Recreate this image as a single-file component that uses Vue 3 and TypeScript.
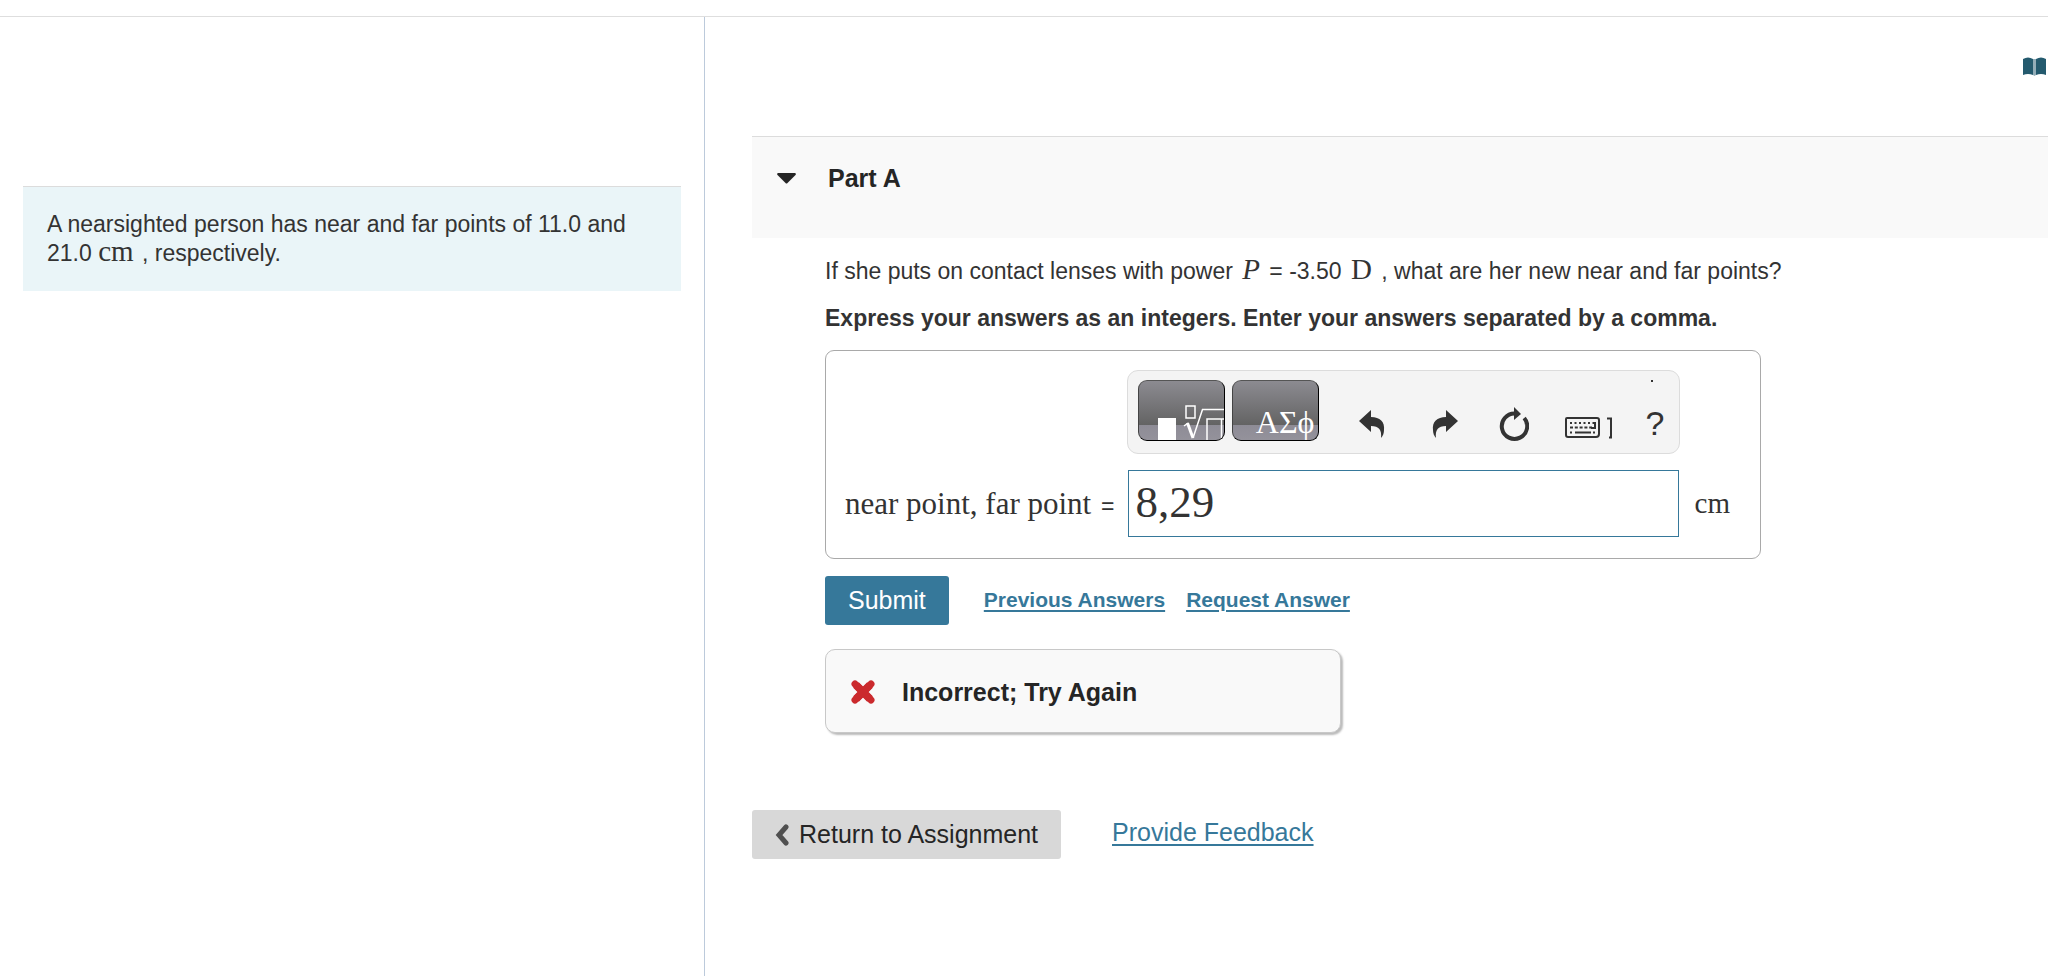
<script setup lang="ts">
import { ref } from 'vue'

const answer = ref('8,29')
const expanded = ref(true)
</script>

<template>
  <div class="page">
    <aside class="intro-pane">
      <p class="intro">
        A nearsighted person has near and far points of 11.0 and 21.0
        <span class="math">cm</span> , respectively.
      </p>
    </aside>

    <main class="work-pane">
      <div class="resources">
        <a href="#" class="book" aria-label="Review resources">
          <svg width="23" height="20" viewBox="0 0 23 20">
            <path d="M0 2Q5 -1 10 2V18Q5 16 0 18Z" fill="#245a6e" />
            <path d="M13 2Q18 -1 23 2V18Q18 16 13 18Z" fill="#245a6e" />
            <path d="M10 2H13V18L11.500 19L10 18Z" fill="#93adb8" />
          </svg>
        </a>
      </div>

      <section>
        <header class="part-header">
          <button
            type="button"
            class="toggle"
            aria-label="Toggle Part A"
            :aria-expanded="expanded"
            @click="expanded = !expanded"
          >
            <svg width="19" height="11" viewBox="0 0 19 11">
              <path d="M1 0H18Q19.500 .5 18.500 2L10.500 10Q9.500 11 8.500 10L.5 2Q-.5 .5 1 0Z" fill="#252525" />
            </svg>
          </button>
          <h2>Part A</h2>
        </header>

        <div v-if="expanded" class="part-body">
          <p class="question">
            If she puts on contact lenses with power <i class="math">P</i> = -3.50
            <span class="math">D</span> , what are her new near and far points?
          </p>
          <p class="hint">
            Express your answers as an integers. Enter your answers separated by a comma.
          </p>

          <form @submit.prevent>
            <div class="answer-box">
              <div class="toolbar" role="toolbar" aria-label="Math input">
                <button type="button" class="palette" aria-label="Templates">
                  <svg width="85" height="59" viewBox="0 0 85 59" fill="none" stroke="#fff">
                    <path d="M19 37H37V59H19Z" fill="#fff" stroke="none" />
                    <path d="M47 25H56V37H47Z" stroke-width="1.500" />
                    <path d="M45 45L49 42" stroke-width="1.500" />
                    <path d="M48.500 42L54 57" stroke-width="3" />
                    <path d="M54 57L63.500 28.500H86" stroke-width="1.500" />
                    <path d="M68 60V38H86M82.500 60V38" stroke-width="1.500" />
                  </svg>
                </button>
                <button type="button" class="palette greek" aria-label="Greek symbols">ΑΣϕ</button>
                <button type="button" class="tool undo" aria-label="Undo">
                  <svg width="26" height="28" viewBox="0 0 26 28">
                    <path d="M0 11L12 0V7C21 7 26 12 25 20C25 23 24 26 22 28C23 20 20 16 12 16V22Z" fill="#333" />
                  </svg>
                </button>
                <button type="button" class="tool redo" aria-label="Redo">
                  <svg width="26" height="28" viewBox="0 0 26 28">
                    <path d="M26 11L14 0V7C5 7 0 12 1 20C1 23 2 26 4 28C3 20 6 16 14 16V22Z" fill="#333" />
                  </svg>
                </button>
                <button type="button" class="tool reset" aria-label="Reset">
                  <svg width="30" height="34" viewBox="0 0 30 34">
                    <path d="M16 6.500A12.700 12.700 0 1 0 25.200 11" fill="none" stroke="#333" stroke-width="4" />
                    <path d="M15 0L22 7L15 13Z" fill="#333" />
                  </svg>
                </button>
                <button type="button" class="tool keys" aria-label="Keyboard shortcuts">
                  <svg width="48" height="22" viewBox="0 0 48 22" fill="none" stroke="#333">
                    <path d="M2 1H32Q34 1 34 3V17Q34 20 31 20H3Q1 20 1 18V2Q1 1 2 1Z" stroke-width="2" />
                    <path d="M5 6H29" stroke-width="2" stroke-dasharray="2 2.500" />
                    <path d="M5 10.500H27" stroke-width="2" stroke-dasharray="3 1.800" />
                    <path d="M30 5V11H26" stroke-width="2" />
                    <path d="M5 15.500H7M10 15.500H26M28 15.500H30" stroke-width="2" />
                    <path d="M42 1.500H46V20.500H44" stroke-width="2" />
                  </svg>
                </button>
                <button type="button" class="tool help" aria-label="Help">
                  <span class="dot"></span>
                  ?
                </button>
              </div>
              <label class="field-label math" for="answer">near point, far point <span class="equals">=</span></label>
              <input id="answer" v-model="answer" class="field" type="text" />
              <span class="unit math">cm</span>
            </div>

            <div class="actions">
              <button type="submit" class="submit">Submit</button>
              <a href="#">Previous Answers</a>
              <a href="#">Request Answer</a>
            </div>
          </form>

          <div class="feedback" role="status">
            <svg width="24" height="24" viewBox="0 0 24 24">
              <path d="M5 5L19 19M19 5L5 19" stroke="#cb2a2d" stroke-width="8" />
              <path d="M4 4L20 20M20 4L4 20" stroke="#cb2a2d" stroke-width="7" stroke-linecap="round" />
            </svg>
            <strong>Incorrect; Try Again</strong>
          </div>
        </div>
      </section>

      <footer class="footer">
        <button type="button" class="return">
          <svg width="14" height="22" viewBox="0 0 14 22" fill="none">
            <path d="M11 3L4 11L11 19" stroke="#505050" stroke-width="5" stroke-linecap="round" />
          </svg>
          Return to Assignment
        </button>
        <a href="#">Provide Feedback</a>
      </footer>
    </main>
  </div>
</template>

<style>
body {
  margin: 0;
  background: #fff;
}
</style>

<style scoped>
.page {
  box-sizing: border-box;
  display: flex;
  min-height: 100vh;
  padding-top: 16px;
  background: linear-gradient(#dedede, #dedede) 0 16px / 100% 1px no-repeat;
  font-family: "Liberation Sans", Arial, sans-serif;
  font-size: 23px;
  line-height: 29px;
  color: #333;
}

p,
h2 {
  margin: 0;
}

button {
  padding: 0;
  border: 0;
  background: none;
  font: inherit;
  color: inherit;
  cursor: pointer;
}

svg {
  display: block;
  flex: none;
}

a {
  color: #36789a;
  text-decoration-thickness: 2px;
  text-underline-offset: 3px;
}

.math {
  font-family: "Liberation Serif", "Times New Roman", serif;
  font-size: 29px;
  line-height: 1;
}

.intro-pane {
  box-sizing: border-box;
  flex: 0 0 34.375%;
  padding: 170px 23px 0;
}

.intro {
  padding: 23px 24px;
  border-top: 1px solid #dcdcdc;
  background: #eaf5f8;
}

.intro .math {
  margin-right: 2px;
  line-height: 24px;
}

.work-pane {
  flex: 1;
  min-width: 0;
  margin-top: 1px;
  padding-left: 47px;
  border-left: 1px solid #bccadb;
}

.resources {
  display: flex;
  justify-content: flex-end;
  height: 79px;
  padding: 40px 2px 0 0;
}

.part-header {
  box-sizing: border-box;
  display: flex;
  align-items: flex-start;
  gap: 32px;
  height: 102px;
  padding: 25px;
  border-top: 1px solid #dcdcdc;
  background: #f9f9f9;
}

.toggle {
  padding: 11px 0;
}

h2 {
  font-size: 25px;
  line-height: 32px;
  color: #252525;
}

.part-body {
  padding: 16px 24px 0 73px;
}

.question {
  line-height: 35px;
}

.question .math {
  margin: 0 3px;
}

.hint {
  margin-top: 13px;
  line-height: 32px;
  font-weight: bold;
}

.answer-box {
  box-sizing: border-box;
  display: grid;
  grid-template-columns: auto 1fr auto;
  align-items: center;
  row-gap: 16px;
  max-width: 936px;
  margin-top: 16px;
  padding: 19px 30px 21px 19px;
  border: 1px solid #a9a9a9;
  border-radius: 9px;
}

.toolbar {
  grid-column: 2;
  box-sizing: border-box;
  display: flex;
  align-items: flex-start;
  height: 84px;
  padding: 9px 0 0 10px;
  border: 1px solid #dcdcdc;
  border-radius: 11px;
  background: #f4f4f4;
}

.palette {
  box-sizing: border-box;
  flex: none;
  width: 87px;
  height: 61px;
  margin-right: 7px;
  overflow: hidden;
  border: 1px solid #000;
  border-top-color: #555;
  border-left-color: #444;
  border-radius: 9px;
  background: linear-gradient(#8c8b91, #636363 75%, #8e8c96 75%, #94929b);
}

.greek {
  margin-right: 16px;
  padding: 22px 4px 0 0;
  font-family: "Liberation Serif", "Times New Roman", serif;
  font-size: 32px;
  line-height: 36px;
  text-align: right;
  color: #fff;
}

.tool {
  position: relative;
  display: flex;
  align-items: center;
  justify-content: center;
  height: 61px;
  padding-top: 26px;
}

.undo {
  width: 74px;
}

.redo {
  width: 72px;
}

.reset {
  width: 65px;
}

.keys {
  width: 85px;
  padding-top: 35px;
}

.help {
  flex: 1;
  font-size: 34px;
}

.dot {
  position: absolute;
  top: 0;
  left: 20px;
  width: 2px;
  height: 2px;
  background: #333;
}

.field-label {
  grid-column: 1;
  padding-right: 13px;
  font-size: 31px;
  white-space: nowrap;
}

.equals {
  margin-left: 2px;
  font-family: "Liberation Sans", Arial, sans-serif;
  font-size: 23px;
}

.field {
  box-sizing: border-box;
  min-width: 0;
  height: 67px;
  margin: 0 1px;
  padding: 0 6px 4px;
  border: 1px solid #36789a;
  border-radius: 0;
  outline: none;
  font-family: "Liberation Serif", "Times New Roman", serif;
  font-size: 45px;
  color: #333;
}

.unit {
  padding-left: 15px;
}

.actions {
  display: flex;
  align-items: center;
  margin-top: 17px;
}

.actions a {
  margin-right: 21px;
  padding-bottom: 2px;
  font-size: 21px;
  font-weight: bold;
}

.submit {
  height: 49px;
  margin-right: 35px;
  padding: 0 23px;
  border-radius: 3px;
  background: #36789a;
  font-size: 25px;
  color: #fff;
}

.feedback {
  box-sizing: border-box;
  display: flex;
  align-items: center;
  gap: 27px;
  max-width: 516px;
  height: 84px;
  margin-top: 24px;
  padding: 2px 25px 0;
  border: 1px solid #c8c8c8;
  border-radius: 10px;
  background: #f9f9f9;
  box-shadow: 2px 2px 2px #bbb;
  font-size: 25px;
  color: #252525;
}

.footer {
  display: flex;
  align-items: flex-start;
  gap: 51px;
  padding: 77px 0 40px;
  font-size: 25px;
}

.footer a {
  padding-top: 8px;
}

.return {
  display: flex;
  align-items: center;
  gap: 10px;
  height: 49px;
  padding: 0 23px;
  border-radius: 3px;
  background: #d8d8d8;
  color: #252525;
}
</style>
